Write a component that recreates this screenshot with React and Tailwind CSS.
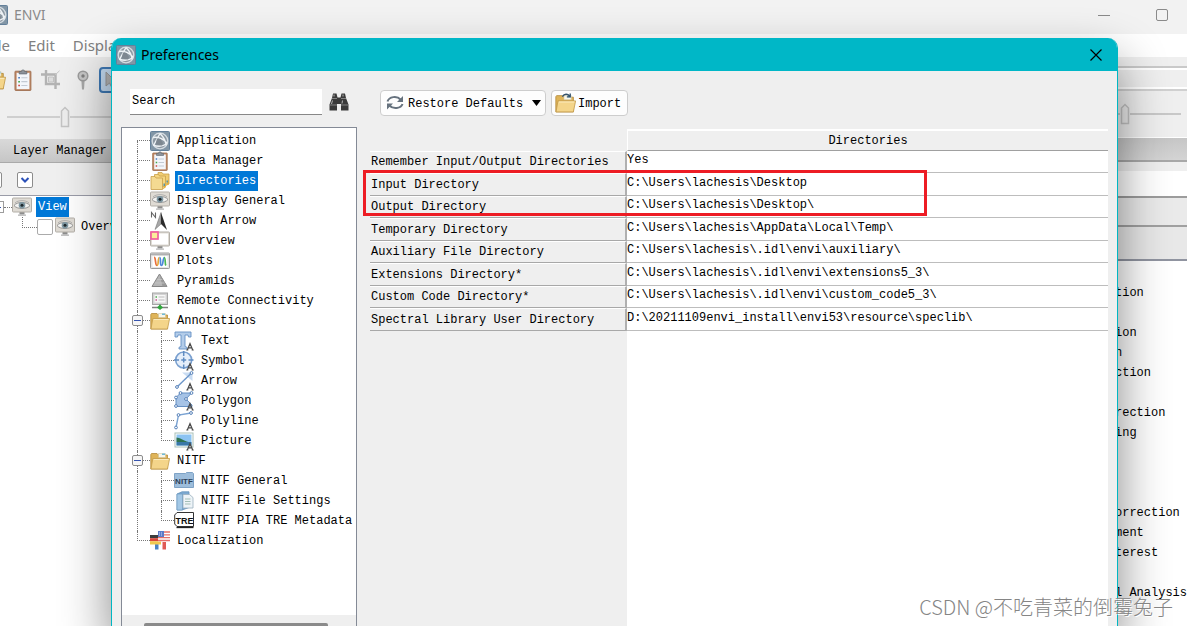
import React from "react";
import clsx from "clsx";

/* ---------- icons ---------- */

const Svg = ({ children, className = "size-5" }) => (
  <svg viewBox="0 0 20 20" className={clsx("block shrink-0", className)} aria-hidden="true">
    {children}
  </svg>
);

const GlobeIcon = ({ className }) => (
  <Svg className={className}>
    <rect x="0.5" y="0.5" width="19" height="19" rx="1" fill="#8296a6" stroke="#64809a" />
    <circle cx="10" cy="10" r="7.800" fill="#8c98a2" stroke="#d5dce2" strokeWidth="1.300" />
    <path d="M10 2.500 3.500 14.500M10 2.500c4 4 6 8 6 12M3 14c5 2 10 1.500 14-1.500M3 6.500C8 5.500 13 7.500 17 12" fill="none" stroke="#eef2f5" strokeWidth="1.500" />
    <path d="M7 7.500 5.500 13.500 12 14.500 13 12 10.500 8z" fill="#7d8790" />
  </Svg>
);

const ClipboardIcon = ({ className }) => (
  <Svg className={className}>
    <rect x="2.700" y="2" width="14.500" height="17.500" rx=".6" fill="#c08a68" stroke="#9c6a4a" strokeWidth=".8" />
    <rect x="4.200" y="3.500" width="11.600" height="14.800" fill="#f3f6fb" />
    <path d="M6.500 4.500V2.300h2a1.500 1.500 0 0 1 3 0h2v2.200z" fill="#8c929a" stroke="#5f666e" strokeWidth=".6" />
    <path d="M8.500 8h5.500M8.500 11.500h5.500M8.500 15h5.500" stroke="#c3cad4" />
    <path d="M5.700 8h1.500" stroke="#4a7ac0" strokeWidth="1.400" />
    <path d="M5.700 11.500h1.500" stroke="#3fa648" strokeWidth="1.400" />
    <path d="M5.700 15h1.500" stroke="#d0443c" strokeWidth="1.400" />
  </Svg>
);

const FoldersIcon = () => (
  <Svg>
    <path d="M8 1.500h4l1 1.500h6V13H8z" fill="#f1cd72" stroke="#c9a04a" strokeWidth=".8" />
    <path d="M4.500 3.500h4l1 1.500h6V15.500h-11z" fill="#f5d681" stroke="#c9a04a" strokeWidth=".8" />
    <path d="M1 5.500h4L6 7h6.500v11.500H1z" fill="#f4da92" stroke="#c9a04a" strokeWidth=".8" />
    <path d="m12.500 18.500 3.200-8v6zM15.500 15l3.500-7v5.500z" fill="#e2b143" />
    <path d="M14.200 12.500v2.500M17.200 9.500v2" stroke="#3f8fb5" strokeWidth="1.300" />
  </Svg>
);

const FolderIcon = ({ className, arrow }) => (
  <Svg className={className}>
    <path d="M.8 3.500 1.500 2.500H7L8.500 4H17.500v14H.8z" fill="#dfb458" stroke="#b48a3a" strokeWidth=".8" />
    <path d="M8.500 2.500h7v4h-7z" fill="#f8f6ea" stroke="#cbbf95" strokeWidth=".5" />
    <path d="M12 2.500h3v1.500h-3z" fill="#6db9d8" />
    <path d="M1 18 2.800 7.500H19.600L17.500 18z" fill="#f4d58a" stroke="#c39c4c" strokeWidth=".8" />
    <path d="M3.800 8.500h14.600" stroke="#fbebbd" />
    {arrow && <path d="M7 3.500C9 .5 12 .5 14 3M14.500 .5v3.200h-3.200" fill="none" stroke="#35536c" strokeWidth="1.300" />}
  </Svg>
);

const Monitor = ({ children }) => (
  <>
    <path d="M7.500 15h5v2.500h-5z" fill="#8d8d8d" />
    <path d="M6 17.500h8v1.300H6z" fill="#b5b5b5" />
    <rect x=".5" y="1" width="19" height="14" rx=".8" fill="#dfdbd4" stroke="#b3afa8" />
    {children}
  </>
);

const EyeIcon = () => (
  <Svg>
    <Monitor>
      <path d="M2 8.500C5 4.500 15 4.500 18 8.500 15 12.500 5 12.500 2 8.500z" fill="#f5f5f3" stroke="#8a8a8a" strokeWidth=".9" />
      <circle cx="10" cy="8.300" r="3.300" fill="#7f98a3" />
      <circle cx="10" cy="8.300" r="1.500" fill="#20292d" />
      <path d="M3 6C6 2.800 14 2.800 17 6" fill="none" stroke="#a5a5a5" strokeWidth=".8" />
    </Monitor>
  </Svg>
);

const OverviewIcon = () => (
  <Svg>
    <Monitor>
      <rect x="2" y="2.500" width="16" height="11" fill="#fff" />
      <rect x="1" y="1" width="7" height="7" fill="#fbee9b" stroke="#f0609f" strokeWidth="1.700" />
    </Monitor>
  </Svg>
);

const NorthIcon = () => (
  <Svg>
    <path d="M1.500 6.500V1.500L5.500 6.500V1.500" fill="none" stroke="#666" strokeWidth="1.100" />
    <path d="M11 1.500 5 18.500 11 13z" fill="#a8a8a8" stroke="#666" strokeWidth=".5" />
    <path d="M11 1.500 17 19l-6-6z" fill="#2b2b2b" />
  </Svg>
);

const PlotsIcon = () => (
  <Svg>
    <rect x=".5" y="2" width="19" height="15.500" rx=".8" fill="#e4e4e4" stroke="#9a9a9a" />
    <path d="M1 3.500h18" stroke="#b0b0b0" strokeWidth="1.500" />
    <rect x="2.500" y="5" width="15" height="11" fill="#fff" />
    <path d="M4 6.500c2-.5 1 8 3 8" fill="none" stroke="#e8703c" strokeWidth="1.700" />
    <path d="M7 14.500c2 0 .5-8 2.500-8" fill="none" stroke="#e3a93b" strokeWidth="1.700" />
    <path d="M9.500 6.500c2 0 0 8 2 8s1-8 3-8" fill="none" stroke="#4c87d9" strokeWidth="1.700" />
    <path d="M14 6.500c2 0 .5 6.500 2 8" fill="none" stroke="#4bb755" strokeWidth="1.700" />
  </Svg>
);

const PyramidIcon = () => (
  <Svg>
    <path d="M9.500 3 2 15.500h15z" fill="#b5b5b5" stroke="#858585" />
    <path d="M9.500 3 12.500 15.500H17z" fill="#999" />
    <path d="M7 8.500h5M4.500 12h10" stroke="#c6c6c6" strokeWidth=".8" />
  </Svg>
);

const RemoteIcon = () => (
  <Svg>
    <rect x="2.500" y="2" width="15" height="11.500" fill="#d4d4d4" stroke="#a5a5a5" />
    <rect x="4.500" y="4" width="11" height="7.500" fill="#f7f7f7" />
    <path d="M5.500 6h1.500" stroke="#4da84d" strokeWidth="1.500" />
    <path d="M5.500 9h1.500" stroke="#c84c8c" strokeWidth="1.500" />
    <path d="M8.500 6h6M8.500 9h6" stroke="#bbb" />
    <path d="M10 13.500v3M2 16.500h16" stroke="#808080" strokeWidth="1.300" />
    <path d="M10 13.500 13 16.500l-3 2.500-3-2.500z" fill="#2fa83c" />
  </Svg>
);

/* small "A" badge shared by every annotation icon */
const BadgeA = () => (
  <path d="m13.300 19 2.700-6.500 2.700 6.500M14 16.800h4M12.300 19h2M17.700 19h2" fill="none" stroke="#4a4a4a" strokeWidth="1.200" />
);

const TextIcon = () => (
  <Svg>
    <path d="M1 1h16v5h-2.500L14 4h-3v11.500l2 .8V18H5v-1.700l2-.8V4H4l-.5 2H1z" fill="#b3cce9" stroke="#6590c4" strokeWidth=".9" />
    <BadgeA />
  </Svg>
);

const SymbolIcon = () => (
  <Svg>
    <circle cx="9.700" cy="9" r="8" fill="#e6effa" stroke="#7ba1d0" strokeWidth="1.600" />
    <path d="M9.700 0v5M9.700 13.500v4.500M0 9h5M14.500 9h5M7.200 9h5M9.700 6.500v5" stroke="#5f8cc2" strokeWidth="1.500" />
    <BadgeA />
  </Svg>
);

const Node = ({ x, y }) => <circle cx={x} cy={y} r="1.400" fill="#fff" stroke="#5580b8" />;

const ArrowIcon = () => (
  <Svg>
    <path d="M8 1.500h10.500V10z" fill="#c9dcf2" />
    <path d="M3 16 17.500 2" stroke="#6c96c9" strokeWidth="1.400" />
    <Node x="3" y="16" />
    <Node x="17.500" y="2" />
    <BadgeA />
  </Svg>
);

const PolygonIcon = () => (
  <Svg>
    <path d="M2 6.500 6.500 2h11L12 8l6 6v1.500H2z" fill="#a6c3e6" stroke="#6590c4" />
    <Node x="2" y="6.500" />
    <Node x="6.500" y="2" />
    <Node x="17.500" y="2" />
    <Node x="12" y="8" />
    <Node x="2" y="15" />
    <BadgeA />
  </Svg>
);

const PolylineIcon = () => (
  <Svg>
    <path d="M2 16.500 4.500 4 17 2" fill="none" stroke="#7ba3d3" strokeWidth="1.400" />
    <Node x="2" y="16.500" />
    <Node x="4.500" y="4" />
    <Node x="17" y="2" />
    <BadgeA />
  </Svg>
);

const PictureIcon = () => (
  <Svg>
    <rect x="1" y="2" width="18" height="14" fill="#fff" stroke="#a9c0b8" />
    <rect x="2.500" y="3.500" width="15" height="11" fill="#8cc3f2" />
    <path d="M2.500 11h15v3.500h-15z" fill="#3a78a8" />
    <path d="M2.500 6.500c3 0 7 3 12 4.500H2.500z" fill="#2f7350" />
    <BadgeA />
  </Svg>
);

const NitfIcon = () => (
  <Svg>
    <path d="M.5 2.500h11l1-1h6l1 1V16.500H.5z" fill="#9dbddb" stroke="#7fa3c6" />
    <text x="10" y="13" textAnchor="middle" fontSize="8" fontWeight="700" fontFamily="Liberation Sans, sans-serif" fill="#2c4056">
      NITF
    </text>
  </Svg>
);

const FileSettingsIcon = () => (
  <Svg>
    <path d="M3 3 8 .8h7v15.700L8 19H3z" fill="#7daad2" stroke="#6493bd" strokeWidth=".8" />
    <path d="M3 3h5.500v16H3z" fill="#a3c8e6" stroke="#6493bd" strokeWidth=".6" />
    <path d="M9 3.500h6.500l3.500 3V17H9z" fill="#eef4f8" stroke="#9ab0be" strokeWidth=".8" />
    <path d="M11 8h5.500M11 10.500h5.500M11 13h5.500" stroke="#a3bfb6" />
  </Svg>
);

const TreIcon = () => (
  <Svg>
    <path d="M3 1.500h16.500v14H3L.7 13V4z" fill="#fff" stroke="#333" />
    <path d="M2.500 16.500h17" stroke="#222" strokeWidth="1.300" />
    <text x="10.500" y="12.500" textAnchor="middle" fontSize="9" fontWeight="700" fontFamily="Liberation Sans, sans-serif" fill="#111">
      TRE
    </text>
  </Svg>
);

const FlagsIcon = () => (
  <Svg>
    <path d="M5 13h3.500v5.500H5z" fill="#4a83c4" />
    <path d="M0 4h11v3.200H0z" fill="#3c3c3c" />
    <path d="M0 7.200h11v3H0z" fill="#d9453a" />
    <path d="M0 10.200h11v3.300H0z" fill="#f0c850" />
    <path d="M12.500 11h3.500v7.500h-3.500z" fill="#e05a55" />
    <path d="M8 0h12v10.500H8z" fill="#fff" />
    <path d="M8 1h12M8 3.800h12M8 6.600h12M8 9.500h12" stroke="#e66f6a" strokeWidth="1.300" />
    <path d="M8 0h6v6H8z" fill="#5c7ac8" />
    <path d="M9 2h4M9 4h4" stroke="#cfd8f2" strokeDasharray="1 1" />
  </Svg>
);

const BinocularsIcon = () => (
  <Svg>
    <path d="M4 1.500h3.500l1 4h3l1-4H16l1 4.500 2.500 6.500v6H12V12H8v6.500H.5v-6L3 6z" fill="#3a3a3a" />
    <path d="M3 6.500h5M12 6.500h5M1 13h7M12 13h7" stroke="#8a8a8a" strokeWidth=".9" />
    <path d="M3.500 8.500 2.500 12M13.500 8.500l-.5 3M5 2.500v2M14 2.500v2" stroke="#b5b5b5" />
  </Svg>
);

const RefreshIcon = () => (
  <Svg>
    <path d="M2.500 8.500C4 3.500 12 2.500 15.500 6.500" fill="none" stroke="#66727e" strokeWidth="2" />
    <path d="M18 3v6h-6z" fill="#66727e" />
    <path d="M17.500 11C16 15.500 8 16.500 4.500 12.500" fill="none" stroke="#66727e" strokeWidth="2" />
    <path d="M2 16.500v-6h6z" fill="#66727e" />
  </Svg>
);

const CropIcon = () => (
  <Svg>
    <path d="M5 0v14h14M0 4.500h14.500V19" fill="none" stroke="#b3b3b3" strokeWidth="2.400" />
    <path d="M7.500 7h5v5h-5z" fill="#dcdcdc" stroke="#c0c0c0" />
    <path d="M14 5 18.500 .8" stroke="#c4c4c4" />
  </Svg>
);

const PinIcon = () => (
  <Svg>
    <path d="M8.300 9h3.400L11 19.500H9z" fill="#a8a8a8" />
    <circle cx="10" cy="6" r="4.800" fill="#c6c6c6" stroke="#9c9c9c" strokeWidth="1.500" />
    <circle cx="10" cy="6" r="1.700" fill="#808080" />
  </Svg>
);

/* ---------- data ---------- */

const treeItems = [
  { label: "Application", icon: GlobeIcon, depth: 0, first: true },
  { label: "Data Manager", icon: ClipboardIcon, depth: 0 },
  { label: "Directories", icon: FoldersIcon, depth: 0, selected: true },
  { label: "Display General", icon: EyeIcon, depth: 0 },
  { label: "North Arrow", icon: NorthIcon, depth: 0 },
  { label: "Overview", icon: OverviewIcon, depth: 0 },
  { label: "Plots", icon: PlotsIcon, depth: 0 },
  { label: "Pyramids", icon: PyramidIcon, depth: 0 },
  { label: "Remote Connectivity", icon: RemoteIcon, depth: 0 },
  { label: "Annotations", icon: FolderIcon, depth: 0, open: true },
  { label: "Text", icon: TextIcon, depth: 1 },
  { label: "Symbol", icon: SymbolIcon, depth: 1 },
  { label: "Arrow", icon: ArrowIcon, depth: 1 },
  { label: "Polygon", icon: PolygonIcon, depth: 1 },
  { label: "Polyline", icon: PolylineIcon, depth: 1 },
  { label: "Picture", icon: PictureIcon, depth: 1, last: true },
  { label: "NITF", icon: FolderIcon, depth: 0, open: true },
  { label: "NITF General", icon: NitfIcon, depth: 1 },
  { label: "NITF File Settings", icon: FileSettingsIcon, depth: 1 },
  { label: "NITF PIA TRE Metadata", icon: TreIcon, depth: 1, last: true },
  { label: "Localization", icon: FlagsIcon, depth: 0, last: true },
];

const directories = [
  ["Remember Input/Output Directories", "Yes"],
  ["Input Directory", "C:\\Users\\lachesis\\Desktop"],
  ["Output Directory", "C:\\Users\\lachesis\\Desktop\\"],
  ["Temporary Directory", "C:\\Users\\lachesis\\AppData\\Local\\Temp\\"],
  ["Auxiliary File Directory", "C:\\Users\\lachesis\\.idl\\envi\\auxiliary\\"],
  ["Extensions Directory*", "C:\\Users\\lachesis\\.idl\\envi\\extensions5_3\\"],
  ["Custom Code Directory*", "C:\\Users\\lachesis\\.idl\\envi\\custom_code5_3\\"],
  ["Spectral Library User Directory", "D:\\20211109envi_install\\envi53\\resource\\speclib\\"],
];

// toolbox entries, one per 20px row, empty where nothing shows
const toolbox = [
  "", "tion", "", "ion", "n", "ction", "", "rection", "ing", "", "", "",
  "orrection", "ment", "terest", "", "l Analysis",
];

/* ---------- main window ---------- */

function SliderThumb() {
  return (
    <svg viewBox="0 0 10 22" className="block h-[22px] w-2.5 shrink-0" aria-hidden="true">
      <path d="M1.500 20.500V5L5 1.500 8.500 5v15.500z" fill="#ededed" stroke="#c4c4c4" strokeWidth="1.500" />
    </svg>
  );
}

function LayerManager() {
  return (
    <div className="-ml-4 flex w-36 flex-col">
      <div className="h-[82px] bg-[#efefef]">
        <div className="flex h-[46px] items-center">
          <FolderIcon className="size-[22px]" />
          <ClipboardIcon className="ml-1.5 size-[22px]" />
          <div className="ml-[7px]"><CropIcon /></div>
          <div className="ml-3"><PinIcon /></div>
          <div className="ml-1.5 flex h-[26px] w-7 items-center rounded border-2 border-[#3f79b5] bg-[#c5dcf2] pl-1">
            <svg viewBox="0 0 12 18" className="h-[18px] w-3" aria-hidden="true">
              <path d="M1 1v14l3.500-3 2.500 5 2.500-1-2.500-5H11z" fill="#b5b5b5" stroke="#9a9a9a" />
            </svg>
          </div>
        </div>
        <div className="flex h-7 items-center">
          <div className="ml-0.5 size-3.5 shrink-0 rounded-full bg-[#c4c4c4]" />
          <div className="ml-[7px] h-0.5 w-[53px] bg-[#cfcfcf]" />
          <SliderThumb />
          <div className="h-0.5 flex-1 bg-[#cfcfcf]" />
        </div>
      </div>
      <div className="flex h-6 items-center border-b border-[#aaa] bg-linear-to-b from-[#d9d9d9] to-[#c6c6c6] pl-[29px] whitespace-pre">
        Layer Manager
      </div>
      <div className="flex h-8 items-center gap-[15px] bg-[#efefef] pt-0.5 pl-0.5">
        <button className="size-4 rounded-xs border border-[#8c8c8c] bg-white" aria-label="Expand" />
        <button className="flex size-4 items-center justify-center rounded-xs border border-[#8c8c8c] bg-white" aria-label="Collapse">
          <svg viewBox="0 0 10 8" className="h-2 w-2.5" aria-hidden="true">
            <path d="M1.500 2 5 5.500 8.500 2" fill="none" stroke="#2b50b8" strokeWidth="2" />
          </svg>
        </button>
      </div>
      <div className="flex-1 border-t border-[#9a9ca8] bg-white pt-px">
        <div className="flex h-5 items-center">
          <div className="ml-2 flex size-3 items-center justify-center border border-[#9c9c9c] bg-white">
            <span className="h-px w-1.5 bg-[#3654b0]" />
          </div>
          <span className="w-2 border-t border-dotted border-[#777]" />
          <EyeIcon />
          <span className="ml-1 bg-[#0078d7] px-0.5 leading-5 text-white">View</span>
        </div>
        <div className="flex h-5 items-start">
          <span className="ml-[38px] h-[11px] w-[15px] shrink-0 border-b border-l border-dotted border-[#777]" />
          <input type="checkbox" aria-label="Overview" className="mt-0.5 size-4 shrink-0 appearance-none rounded-xs border border-[#ababab] bg-white" />
          <span className="ml-0.5"><EyeIcon /></span>
          <span className="ml-1.5 leading-5">Overview</span>
        </div>
      </div>
    </div>
  );
}

function Toolbox() {
  return (
    <div className="flex w-[72px] flex-col overflow-hidden bg-[#efefef]">
      <div className="h-[11px] border-b-2 border-[#c9c9c9]" />
      <div className="h-[21px] border-y-2 border-white" />
      <div className="flex h-[49px] items-center border-t-2 border-b border-t-[#d0d0d0] border-b-white">
        <div className="h-0.5 w-[5px] bg-[#c8c8c8]" />
        <SliderThumb />
        <div className="mr-1.5 h-0.5 flex-1 bg-[#c8c8c8]" />
      </div>
      <div className="h-6 border-b-2 border-[#a8a8a8] bg-linear-to-b from-[#c6c6c6] to-[#d4d4d4]" />
      <div className="h-[9px]" />
      <div className="h-[27px] border-b-2 border-[#9c9c9c] bg-white" />
      <div className="h-[29px] border-b-2 border-[#a0a0a0] bg-[#eaeaea]" />
      <div className="h-[34px] border-b-2 border-[#9094a0] bg-[#e8e8e8]" />
      <div className="flex-1 bg-white pt-0.5">
        {toolbox.map((name, i) => (
          <div key={i} className="h-5 leading-5 whitespace-pre">{name}</div>
        ))}
      </div>
    </div>
  );
}

/* ---------- preferences dialog ---------- */

function Guide({ first, last }) {
  return (
    <span className="flex h-5 w-[13px] shrink-0 flex-col">
      <span className={clsx("h-2.5 border-b border-dotted border-[#777]", !first && "border-l")} />
      <span className={clsx("flex-1 border-dotted border-[#777]", !last && "border-l")} />
    </span>
  );
}

function TreeRow({ item }) {
  const Icon = item.icon;
  return (
    <li className="relative flex h-5 items-center pl-[15px] whitespace-pre">
      {item.depth === 1 && <span className="h-5 w-6 shrink-0 border-l border-dotted border-[#777]" />}
      <Guide first={item.first} last={item.last} />
      {item.open && (
        <button
          aria-label={`Collapse ${item.label}`}
          className="absolute top-1 left-2.5 flex size-[11px] items-center justify-center rounded-xs border border-[#8c8c8c] bg-[#f6f6f6]"
        >
          <span className="h-px w-[7px] bg-[#3654b0]" />
        </button>
      )}
      <Icon />
      <span className={clsx("ml-[5px] px-0.5 leading-5", item.selected && "bg-[#0078d7] text-white")}>
        {item.label}
      </span>
    </li>
  );
}

function PreferencesDialog() {
  return (
    <section className="absolute top-[38px] right-[69px] bottom-0 left-[111px] flex flex-col overflow-hidden rounded-t-[10px] border-x border-[#00b7c3] bg-[#efefef] shadow-[0_24px_50px_0px_rgba(0,0,0,0.48)]">
      <header className="flex h-[33px] shrink-0 items-center bg-[#00b7c7] pr-[15px] pl-1">
        <GlobeIcon />
        <h1 className="ml-[5px] flex-1 font-['Noto_Sans',sans-serif] text-sm">Preferences</h1>
        <button aria-label="Close">
          <svg viewBox="0 0 12 12" className="size-3" aria-hidden="true">
            <path d="M.5 .5 11.500 11.500M11.500 .5 .5 11.500" stroke="#000" strokeWidth="1.200" />
          </svg>
        </button>
      </header>

      <div className="flex min-h-0 flex-1 pr-[9px] pl-[9px]">
        <div className="flex w-[236px] shrink-0 flex-col">
          <div className="flex h-14 items-center pt-1.5 pl-[9px]">
            <input
              type="text"
              aria-label="Search"
              defaultValue="Search"
              className="h-[26px] w-48 border-b border-[#888] bg-white px-0.5 pb-0.5 outline-none"
            />
            <button aria-label="Find" className="ml-[7px]">
              <BinocularsIcon />
            </button>
          </div>
          <div className="flex min-h-0 flex-1 flex-col overflow-hidden border-x border-t border-[#848a96] bg-white">
            <ul className="flex-1 pt-[3px]">
              {treeItems.map((item) => (
                <TreeRow key={item.label} item={item} />
              ))}
            </ul>
            <div className="flex h-[11px] shrink-0 items-end bg-[#efefef] pr-7 pl-[22px]">
              <div className="h-[3px] flex-1 rounded-t-xs bg-[#8a8a8a]" />
            </div>
          </div>
        </div>

        <div className="ml-[13px] flex min-w-0 flex-1 flex-col">
          <div className="flex h-[58px] items-center gap-[5px] pt-1.5 pl-2.5">
            <button className="flex h-[26px] w-[166px] items-center rounded border border-[#cdcdcd] bg-[#fdfdfd] pl-1">
              <RefreshIcon />
              <span className="ml-[3px] flex-1 pt-0.5 text-left whitespace-nowrap">Restore Defaults</span>
              <svg viewBox="0 0 9 6" className="mr-1 h-1.5 w-[9px]" aria-hidden="true">
                <path d="M0 0h9L4.500 6z" fill="#000" />
              </svg>
            </button>
            <button className="flex h-[26px] w-[77px] items-center gap-0.5 rounded border border-[#cdcdcd] bg-[#fdfdfd] pl-[3px]">
              <FolderIcon arrow className="size-[21px]" />
              <span className="pt-0.5">Import</span>
            </button>
          </div>

          <div className="relative flex min-h-0 flex-1 flex-col">
            <table className="w-full table-fixed border-separate border-spacing-0 text-left">
              <thead>
                <tr className="h-[22px]">
                  <td className="w-[257px]" />
                  <th className="border-t-2 border-b border-l border-t-white border-b-[#a0a0a0] border-l-white p-0 text-center font-normal">
                    Directories
                  </th>
                </tr>
              </thead>
              <tbody>
                {directories.map(([name, value]) => (
                  <tr key={name} className="odd:h-[22px] even:h-[23px]">
                    <th className="border-t border-r-2 border-b border-t-white border-r-[#b0b0b0] border-b-[#a8a8a8] p-0 pl-px leading-[18px] font-normal whitespace-nowrap">
                      {name}
                    </th>
                    <td className="border-b border-[#bdbdbd] bg-white p-0 pb-[3px] leading-[18px] whitespace-nowrap">
                      {value}
                    </td>
                  </tr>
                ))}
              </tbody>
            </table>
            <div className="ml-[257px] flex-1 bg-white" />
            {/* highlight around the input / output rows */}
            <div className="pointer-events-none absolute top-[41px] -left-[7px] h-[46px] w-[564px] border-3 border-[#ed1c24]" />
          </div>
        </div>
      </div>
    </section>
  );
}

export default function App() {
  return (
    <div className="relative flex min-h-screen flex-col overflow-hidden bg-white font-['Liberation_Mono',monospace] text-[12px] text-black">
      <header className="flex h-[34px] items-center bg-[#f2f2f2] font-['Noto_Sans',sans-serif]">
        <div className="-ml-3 flex flex-1 items-center gap-1.5 pb-1">
          <GlobeIcon />
          <span className="text-sm text-[#8a8a8a]">ENVI</span>
        </div>
        <div className="-mr-1 flex h-7 pb-1">
          <button aria-label="Minimize" className="flex w-[58px] items-center justify-center">
            <span className="h-px w-3 bg-[#8a8a8a]" />
          </button>
          <button aria-label="Maximize" className="flex w-[58px] items-center justify-center">
            <span className="size-3 rounded-xs border border-[#8a8a8a]" />
          </button>
        </div>
      </header>
      <nav className="-ml-3.5 flex h-[23px] items-center gap-[18px] bg-white font-['Noto_Sans',sans-serif] text-[15px] text-[#808080]">
        <a href="#file">File</a>
        <a href="#edit">Edit</a>
        <a href="#display">Display</a>
      </nav>
      <main className="flex flex-1 justify-between">
        <LayerManager />
        <Toolbox />
      </main>

      <PreferencesDialog />

      <p className="absolute right-3.5 bottom-1 font-['Noto_Sans_CJK_SC',sans-serif] text-[20px] leading-[30px] font-light text-[#858585] [text-shadow:1px_1px_0_#fff]">
        CSDN @不吃青菜的倒霉兔子
      </p>
    </div>
  );
}
